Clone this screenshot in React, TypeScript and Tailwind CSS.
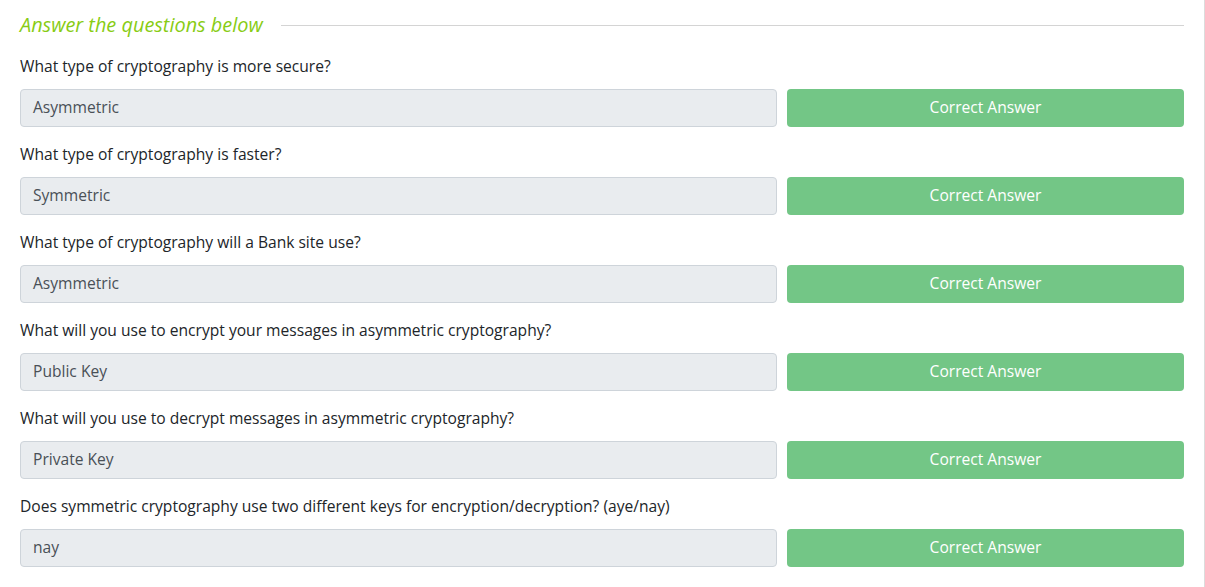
const QUESTIONS = [
  { q: "What type of cryptography is more secure?", a: "Asymmetric" },
  { q: "What type of cryptography is faster?", a: "Symmetric" },
  { q: "What type of cryptography will a Bank site use?", a: "Asymmetric" },
  { q: "What will you use to encrypt your messages in asymmetric cryptography?", a: "Public Key" },
  { q: "What will you use to decrypt messages in asymmetric cryptography?", a: "Private Key" },
  { q: "Does symmetric cryptography use two different keys for encryption/decryption? (aye/nay)", a: "nay" },
];

export default function App() {
  return (
    <div
      className="min-h-[587px] w-[1205px] border-r border-[#dcdcdc] bg-white pl-5 pr-5 pt-[11px]"
      style={{ fontFamily: '"Open Sans", "Noto Sans", sans-serif' }}
    >
      {/* header */}
      <div className="flex h-[27px] items-center gap-[18px]">
        <h3 className="text-[19.9px] italic leading-[27px] text-[#88cc14]">Answer the questions below</h3>
        <div className="mt-[1px] h-px flex-1 bg-[#d4d4d4]" />
      </div>

      <div className="mt-[16px]">
        {QUESTIONS.map((item, i) => (
          <div key={i} className="mb-[15px]">
            <p className="pb-[2px] text-[15.6px] leading-[24px] text-[#212529]">{item.q}</p>
            <div className="mt-[9px] flex gap-[10px]">
              <div className="flex h-[38px] w-[757px] items-center rounded-[4px] border border-[#ced4da] bg-[#e9ecef] px-3 pb-[1px] text-[15.6px] text-[#495057]">
                {item.a}
              </div>
              <button className="h-[38px] flex-1 rounded-[4px] bg-[#73c686] pb-[1px] text-[15.6px] text-white">
                Correct Answer
              </button>
            </div>
          </div>
        ))}
      </div>
    </div>
  );
}
